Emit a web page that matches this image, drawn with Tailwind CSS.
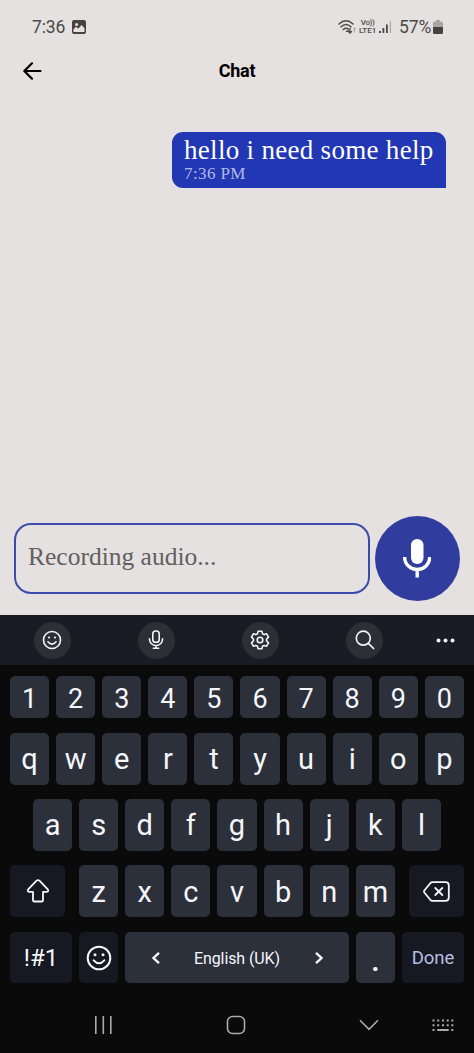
<!DOCTYPE html>
<html lang="en">
<head>
<meta charset="utf-8">
<title>Chat</title>
<script src="https://cdn.jsdelivr.net/npm/@tailwindcss/browser@4"></script>
</head>
<body class="w-[474px] h-[1053px] overflow-hidden bg-[#e5e1e0] font-[Roboto,sans-serif] flex flex-col">
<header class="h-[54px] shrink-0 flex items-center pl-8 pr-[31px] text-[#4c494a]">
  <span class="text-[17.5px] w-[33px] tracking-[-0.1px]">7:36</span>
  <svg class="ml-[7px]" width="14" height="14" viewBox="0 0 14 14"><rect width="14" height="14" rx="2" fill="#454243"/><circle cx="4.6" cy="4.6" r="1.5" fill="#e5e1e0"/><path d="M1.500 12V9.200L4 6.800l2.300 2L9.600 5l2.900 3.200V12z" fill="#e5e1e0"/></svg>
  <svg class="ml-auto" width="19" height="16" viewBox="0 0 19 16" fill="none" stroke="#4c494a" stroke-width="1.5" stroke-linecap="round"><path d="M1 5Q8-1.500 15 5M3 7.800Q8 3.200 13 7.800M5.300 10.500Q8 8.200 10.500 10.300M8.500 12.200L11.500 12.200"/><path d="M12 9v5M10.400 12.500L12 14.200l1.600-1.700" stroke-width="1.200"/><path d="M16.500 13V9M15.500 10l1-1 1 1" stroke="#aaa6a6" stroke-width="1"/></svg>
  <span class="ml-[1px] w-[19px] flex flex-col items-center font-medium text-[8px] leading-[8px]"><span class="whitespace-nowrap tracking-[-0.4px]">Vo))</span><span>LTE1</span></span>
  <svg class="ml-[2px]" width="13" height="14" viewBox="0 0 13 14" fill="#4c494a"><path d="M0 11h2v2H0zM3.500 8h1.800v5H3.500zM7 4.500h1.800V13H7z"/><path d="M10.800 1h1.200v12h-1.200z" fill="#aaa6a6"/></svg>
  <span class="ml-[7px] text-[17.5px] tracking-[-0.200px]">57%</span>
  <svg class="ml-[2px]" width="10" height="14" viewBox="0 0 10 14"><path d="M3 0h4v1.500h1.500Q10 1.500 10 3v4H0V3q0-1.500 1.500-1.500H3z" fill="#aaa6a6"/><path d="M0 7h10v5.500Q10 14 8.500 14h-7Q0 14 0 12.500z" fill="#454243"/></svg>
</header>
<div class="h-[34px] shrink-0 grid grid-cols-[1fr_auto_1fr] items-center px-[23px]">
  <svg width="19" height="18" viewBox="0 0 19 18" fill="none" stroke="#000" stroke-width="2.200" stroke-linecap="round" stroke-linejoin="round"><path d="M17.500 9H1.500M9 1.300L1.300 9 9 16.700"/></svg>
  <h1 class="-mt-[2px] text-[18px] font-bold text-black tracking-[-0.300px]">Chat</h1>
</div>
<main class="flex-1 pt-[44px] pr-[28px] flex items-start justify-end">
  <div class="w-[274px] h-[56px] bg-[#2237b4] rounded-[11px] rounded-br-none pl-[12px] pt-[3px] font-['Liberation_Serif',serif] whitespace-nowrap">
    <p class="text-[27px] leading-[30px] tracking-[0.300px] text-white">hello i need some help</p>
    <p class="text-[17px] leading-[17px] tracking-[0.400px] text-[#b3b9e4]">7:36 PM</p>
  </div>
</main>
<div class="h-[100px] shrink-0 pl-[14px] pt-[1px] flex items-start">
  <div class="mt-[7px] w-[356px] h-[71px] rounded-[17px] border-2 border-[#3d4cab] pl-[12px] flex items-center font-['Liberation_Serif',serif] text-[25.5px] text-[#62605f]"><span class="-mt-[2px]">Recording audio...</span></div>
  <div class="ml-[5px] w-[85px] h-[85px] rounded-full bg-[#303d9e] flex items-center justify-center">
    <svg width="28" height="39" viewBox="0 0 28 39" class="-ml-px"><rect x="8" width="12.500" height="25" rx="6.200" fill="#fff"/><path d="M1.700 18v.5a12.500 12 0 0 0 25 0V18M14.200 30v8.500" fill="none" stroke="#fff" stroke-width="3.400"/></svg>
  </div>
</div>
<section class="h-[438px] shrink-0 bg-[#0a0a0b] text-[#f5f6fa] flex flex-col">
  <div class="h-[50px] shrink-0 bg-[#1a1c25] flex items-center pl-[33.5px] gap-[67.2px] *:shrink-0">
    <span class="size-[37px] rounded-full bg-[#2e2f34] flex items-center justify-center"><svg width="20" height="20" viewBox="0 0 20 20" fill="none" stroke="#f2f3f7" stroke-width="1.600" stroke-linecap="round"><circle cx="10" cy="10" r="8.500"/><path d="M5.900 11.800q4.100 4.700 8.200 0"/><circle cx="7" cy="7.500" r="1.100" fill="#f2f3f7" stroke="none"/><circle cx="13" cy="7.500" r="1.100" fill="#f2f3f7" stroke="none"/></svg></span>
    <span class="size-[37px] rounded-full bg-[#2e2f34] flex items-center justify-center"><svg width="16" height="20" viewBox="0 0 16 20" fill="none" stroke="#f2f3f7" stroke-width="1.600" stroke-linecap="round"><rect x="4.800" y="1" width="6.400" height="11.200" rx="2.800"/><path d="M1.500 8.800v.7a6.500 6 0 0 0 13 0v-.7M5.300 18.300h5.400M8 15.500v2.500"/></svg></span>
    <span class="size-[37px] rounded-full bg-[#2e2f34] flex items-center justify-center"><svg width="20" height="20" viewBox="0 0 20 20" fill="none" stroke="#f2f3f7" stroke-width="1.600" stroke-linejoin="round"><path d="M8.100 1.200h3.800l.6 2.500 1.600.9 2.500-.8 1.900 3.300-1.900 1.900v2l1.900 1.900-1.900 3.300-2.500-.8-1.600.9-.6 2.500H8.100l-.6-2.500-1.600-.9-2.500.8-1.900-3.300L3.400 11V9L1.500 7.100l1.900-3.300 2.500.8 1.600-.9z"/><circle cx="10" cy="10" r="2.800"/></svg></span>
    <span class="size-[37px] rounded-full bg-[#2e2f34] flex items-center justify-center"><svg width="20" height="20" viewBox="0 0 20 20" fill="none" stroke="#f2f3f7" stroke-width="1.700" stroke-linecap="round"><circle cx="8.300" cy="8.200" r="7"/><path d="M13.400 13.300L18.600 18.500"/></svg></span>
    <svg class="-ml-[14px]" width="19" height="6" viewBox="0 0 19 6" fill="#f2f3f7"><circle cx="2.500" cy="3.500" r="2"/><circle cx="9.500" cy="3.500" r="2"/><circle cx="16.500" cy="3.500" r="2"/></svg>
  </div>
  <div class="mt-[11px] mx-[10px] h-[42px] shrink-0 flex gap-[7px] text-[27px] *:flex-1 *:rounded-[5px] *:bg-[#2c303b] *:flex *:items-center *:justify-center *:pt-[4px]">
    <span>1</span><span>2</span><span>3</span><span>4</span><span>5</span><span>6</span><span>7</span><span>8</span><span>9</span><span>0</span>
  </div>
  <div class="mt-[15px] mx-[10px] h-[52px] shrink-0 flex gap-[7px] text-[29px] *:flex-1 *:rounded-[5px] *:bg-[#2c303b] *:flex *:items-center *:justify-center *:pt-[2px]">
    <span>q</span><span>w</span><span>e</span><span>r</span><span>t</span><span>y</span><span>u</span><span>i</span><span>o</span><span>p</span>
  </div>
  <div class="mt-[14px] mx-[33px] h-[52px] shrink-0 flex gap-[7px] text-[29px] *:flex-1 *:rounded-[5px] *:bg-[#2c303b] *:flex *:items-center *:justify-center *:pt-[2px]">
    <span>a</span><span>s</span><span>d</span><span>f</span><span>g</span><span>h</span><span>j</span><span>k</span><span>l</span>
  </div>
  <div class="mt-[14px] mx-[10px] h-[52px] shrink-0 flex justify-between text-[29px]">
    <span class="w-[55px] rounded-[5px] bg-[#171922] flex items-center justify-center"><svg width="24" height="24" viewBox="0 0 24 24" fill="none" stroke="#f5f6fa" stroke-width="1.800" stroke-linejoin="round"><path d="M10.300 1.900q1.700-1.500 3.400 0l8.100 8.500q1.200 2-1 2.500H17v8.300q0 1.300-1.300 1.300H8.300Q7 22.500 7 21.200v-8.300H3.200q-2.200-.5-1-2.500z"/></svg></span>
    <div class="w-[316px] flex gap-[7px] *:flex-1 *:rounded-[5px] *:bg-[#2c303b] *:flex *:items-center *:justify-center *:pt-[3px]">
      <span>z</span><span>x</span><span>c</span><span>v</span><span>b</span><span>n</span><span>m</span>
    </div>
    <span class="w-[55px] rounded-[5px] bg-[#171922] flex items-center justify-center"><svg width="27" height="21" viewBox="0 0 27 21" fill="none" stroke="#f5f6fa" stroke-width="1.800" stroke-linecap="round" stroke-linejoin="round"><path d="M9.500 1.200H22.500q3.300 0 3.300 3.300v12q0 3.300-3.300 3.300H9.500q-1.300 0-2.200-1L1.500 11.700q-.9-1.200 0-2.400L7.300 2.200q.9-1 2.200-1z"/><path d="M12.300 7l7 7M19.300 7l-7 7"/></svg></span>
  </div>
  <div class="mt-[15px] mx-[10px] h-[51px] shrink-0 flex gap-[7px] *:rounded-[5px] *:flex *:items-center *:justify-center">
    <span class="w-[62px] bg-[#171922] text-[24px]">!#1</span>
    <span class="w-[39px] bg-[#171922]"><svg width="26" height="26" viewBox="0 0 26 26" fill="none" stroke="#f5f6fa" stroke-width="2" stroke-linecap="round"><circle cx="13" cy="13" r="11.300"/><path d="M7.700 15.300q5.300 6 10.600 0"/><circle cx="9" cy="9.700" r="1.500" fill="#f5f6fa" stroke="none"/><circle cx="17" cy="9.700" r="1.500" fill="#f5f6fa" stroke="none"/></svg></span>
    <span class="flex-1 bg-[#2c303b] text-[16px]"><svg width="8" height="12" viewBox="0 0 8 12" fill="none" stroke="#f5f6fa" stroke-width="2.300"><path d="M7 .8L1.500 6 7 11.200"/></svg><span class="w-[155px] pt-[2px] tracking-[-0.100px] text-center">English (UK)</span><svg width="8" height="12" viewBox="0 0 8 12" fill="none" stroke="#f5f6fa" stroke-width="2.300"><path d="M1 .8L6.500 6 1 11.200"/></svg></span>
    <span class="w-[39px] bg-[#2c303b] text-[32px] font-medium pt-[4px]">.</span>
    <span class="w-[62px] bg-[#171922] text-[18.5px] pt-[3px] text-[#b5bfe2]">Done</span>
  </div>
  <nav class="flex-1 flex items-center pl-[94px] pr-[20px] pt-[14px]">
    <svg width="19" height="18" viewBox="0 0 19 18" fill="#aaa"><path d="M1 0h1.600v18H1zM8.500 0h1.600v18H8.500zM16 0h1.600v18H16z"/></svg>
    <svg class="ml-[113px]" width="20" height="20" viewBox="0 0 20 20" fill="none" stroke="#aaa" stroke-width="1.600"><rect x="1.500" y="1.500" width="17" height="17" rx="5"/></svg>
    <svg class="ml-[113px]" width="20" height="12" viewBox="0 0 20 12" fill="none" stroke="#aaa" stroke-width="1.600"><path d="M1 1.300l9 9 9-9"/></svg>
    <svg class="ml-auto" width="22" height="13" viewBox="0 0 22 13" fill="#aaa"><path d="M.5.500h2v2h-2zM5.200.500h2v2h-2zM10 .5h2v2h-2zM14.700.500h2v2h-2zM19.300.500h2v2h-2zM.5 5.200h2v2h-2zM5.200 5.200h2v2h-2zM10 5.200h2v2h-2zM14.700 5.200h2v2h-2zM19.300 5.200h2v2h-2zM.5 10h2v2h-2zM5.200 10h11.500v2H5.200zM19.300 10h2v2h-2z"/></svg>
  </nav>
</section>
</body>
</html>
